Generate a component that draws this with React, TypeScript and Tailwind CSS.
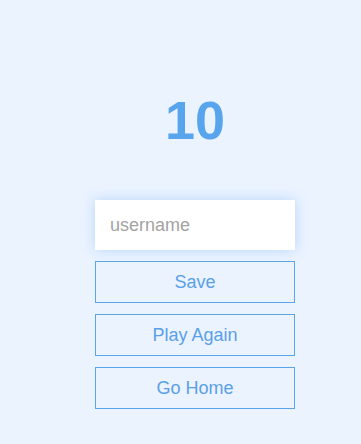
import React from "react";

export default function App() {
  return (
    <div
      className="w-[361px] h-[444px] bg-[#ebf3ff] flex flex-col items-center pl-[29px] overflow-hidden"
      style={{ fontFamily: '"Liberation Sans", Arial, sans-serif' }}
    >
      <div className="mt-[84px] h-[72px] flex items-center text-[54px] font-bold text-[#58a5ee] leading-none">
        10
      </div>
      <div className="mt-[44px] flex flex-col gap-[11px] w-[200px]">
        <input
          placeholder="username"
          className="h-[50px] w-[200px] bg-white px-[15px] text-[18px] text-gray-700 placeholder:text-[#a3a3a3] outline-none shadow-[0_0_12px_rgba(120,180,240,0.45)]"
        />
        <button className="h-[42px] border border-[#5aa4ea] text-[#5aa0e8] text-[18px] bg-transparent">
          Save
        </button>
        <button className="h-[42px] border border-[#5aa4ea] text-[#5aa0e8] text-[18px] bg-transparent">
          Play Again
        </button>
        <button className="h-[42px] border border-[#5aa4ea] text-[#5aa0e8] text-[18px] bg-transparent">
          Go Home
        </button>
      </div>
    </div>
  );
}
